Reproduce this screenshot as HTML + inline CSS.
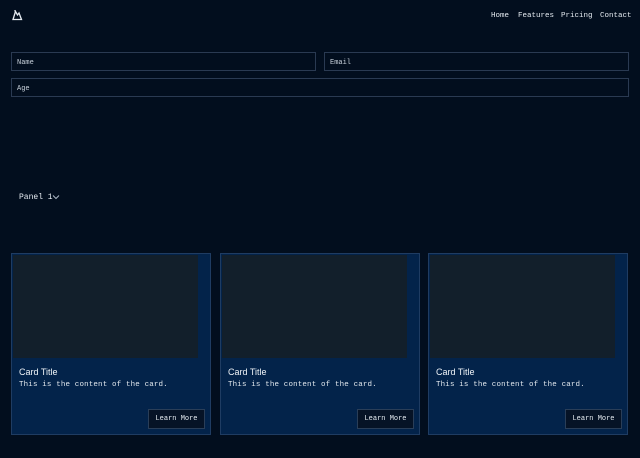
<!DOCTYPE html><html><head><style>
*{box-sizing:border-box;margin:0;padding:0}
body{width:640px;height:458px;background:#020e1e;font-family:"Liberation Mono",monospace;color:#dfe6ee;position:relative;overflow:hidden}
.a{position:absolute}
.nav{top:12px;font-size:7.5px;color:#e6ecf2}
.in{border:1px solid #2a3a52;font-size:7px;color:#c9d2dc;padding:6px 5px;height:19px;background:#020e1e}
.card{top:253px;width:200px;height:182px;background:#03234a;border:1px solid #1f3c62}
.img{position:absolute;left:1px;top:1px;width:185px;height:103px;background:#121f2b}
.t{position:absolute;left:7px;top:113px;font:9px "Liberation Sans",sans-serif;color:#f0f4f8}
.c{position:absolute;left:7px;top:127px;font-size:7.5px;letter-spacing:0.15px;color:#e2e8ee}
.b{position:absolute;left:136px;top:155px;width:57px;height:20px;background:#061326;border:1px solid #2a3e58;font-size:7px;color:#e6ecf2;text-align:center;line-height:18px}
</style></head><body>
<svg class="a" style="left:11px;top:9px" width="12" height="12" viewBox="0 0 12 12"><path d="M2 10.5 L4.5 2.5 L6.5 6 L8 4 L10.5 10.5 Z" fill="none" stroke="#e6ecf2" stroke-width="1.3"/><circle cx="4" cy="1.8" r="0.8" fill="#e6ecf2"/></svg>
<div class="a nav" style="left:491px">Home</div>
<div class="a nav" style="left:518px">Features</div>
<div class="a nav" style="left:561px">Pricing</div>
<div class="a nav" style="left:600px">Contact</div>
<div class="a in" style="left:11px;top:52px;width:305px">Name</div>
<div class="a in" style="left:324px;top:52px;width:305px">Email</div>
<div class="a in" style="left:11px;top:78px;width:618px">Age</div>
<div class="a" style="left:19px;top:193px;font-size:8px;color:#e6ecf2">Panel 1</div>
<svg class="a" style="left:52px;top:194px" width="8" height="6"><path d="M1 1.5 L4 4.5 L7 1.5" fill="none" stroke="#aab6c4" stroke-width="1"/></svg>
<div class="a card" style="left:11px"><div class="img"></div><div class="t">Card Title</div><div class="c">This is the content of the card.</div><div class="b">Learn More</div></div>
<div class="a card" style="left:220px"><div class="img"></div><div class="t">Card Title</div><div class="c">This is the content of the card.</div><div class="b">Learn More</div></div>
<div class="a card" style="left:428px"><div class="img"></div><div class="t">Card Title</div><div class="c">This is the content of the card.</div><div class="b">Learn More</div></div>
</body></html>
